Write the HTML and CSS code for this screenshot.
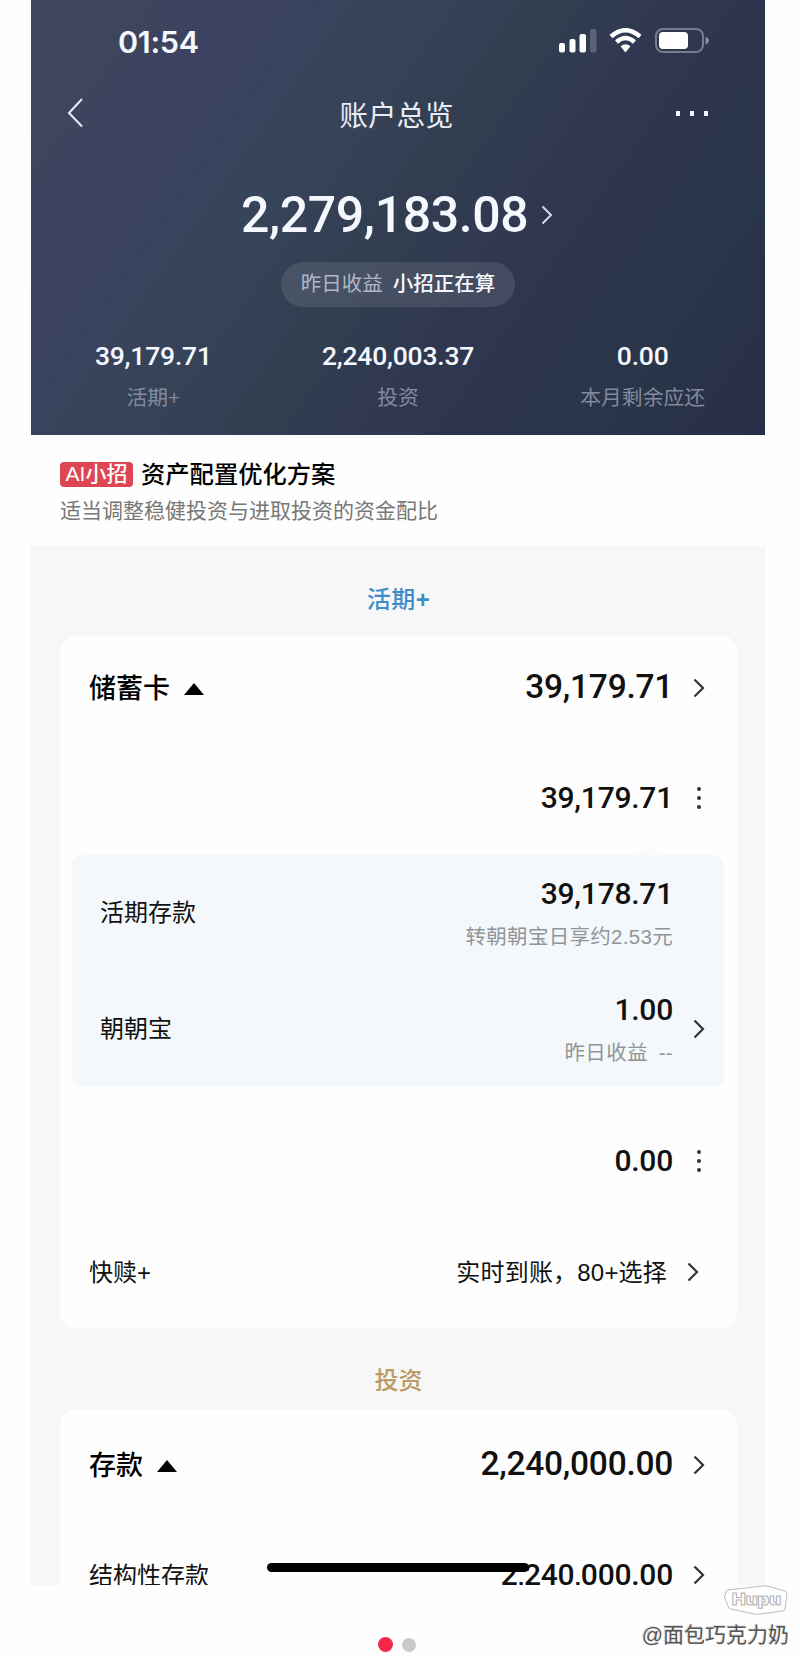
FILE: index.html
```
<!DOCTYPE html>
<html lang="zh-CN">
<head>
    <meta charset="utf-8">
    <title>账户总览</title>
    <link rel="stylesheet" href="styles.css">
</head>
<body>
    <div class="phone">
        <div class="header">
            <!-- status bar -->
            <div class="status">
                <span class="time">01:54</span>
                <div class="status-icons">
                    <svg class="signal" width="38" height="25" viewBox="0 0 38 25">
                        <rect x="0" y="15" width="6" height="9.500" rx="2" fill="#fff"/>
                        <rect x="10.500" y="11" width="6" height="13.500" rx="2" fill="#fff"/>
                        <rect x="20.500" y="6" width="6.500" height="18.500" rx="2" fill="#fff"/>
                        <rect x="31" y="1" width="6.500" height="23.500" rx="2" fill="#fff" opacity=".2"/>
                    </svg>
                    <svg class="wifi" width="33" height="25" viewBox="0 0 33 25">
                        <path d="M2 8.500Q16.500-4 31 8.500" fill="none" stroke="#fff" stroke-width="4.500"/>
                        <path d="M7.500 14Q16.500 6 25.500 14" fill="none" stroke="#fff" stroke-width="4.500"/>
                        <path d="M11.500 18.300Q16.500 14 21.500 18.300L16.500 24.500Z" fill="#fff"/>
                    </svg>
                    <svg class="battery" width="54" height="25" viewBox="0 0 54 25">
                        <rect x="1" y="1" width="47" height="23" rx="7" fill="none" stroke="#fff" stroke-opacity=".35" stroke-width="2"/>
                        <rect x="4" y="4" width="29" height="17" rx="4" fill="#fff"/>
                        <path d="M50.500 9Q54 10 54 12.500T50.500 16.500Z" fill="#fff" opacity=".45"/>
                    </svg>
                </div>
            </div>
            <!-- nav bar -->
            <div class="nav">
                <svg width="16" height="30" viewBox="0 0 16 30"><path d="M15 1L2 15L15 28.500" fill="none" stroke="#e9ecf8" stroke-width="2"/></svg>
                <span class="nav-title">账户总览</span>
                <span class="more"><i></i><i></i><i></i></span>
            </div>
            <div class="total">
                <span class="total-num">2,279,183.08</span>
                <svg width="12" height="20" viewBox="0 0 12 20"><path d="M1.500 1.500L10 10L1.500 18.500" fill="none" stroke="#d5d9e4" stroke-width="2"/></svg>
            </div>
            <div class="pill"><span>昨日收益</span><b>小招正在算</b></div>
            <div class="stats">
                <div class="stat"><span class="stat-num">39,179.71</span><span class="stat-label">活期+</span></div>
                <div class="stat"><span class="stat-num">2,240,003.37</span><span class="stat-label">投资</span></div>
                <div class="stat"><span class="stat-num">0.00</span><span class="stat-label">本月剩余应还</span></div>
            </div>
        </div>

        <div class="advice">
            <div class="advice-title"><span class="badge">AI小招</span><span class="advice-text">资产配置优化方案</span></div>
            <div class="advice-sub">适当调整稳健投资与进取投资的资金配比</div>
        </div>

        <div class="main">
            <div class="section-title blue">活期<b>+</b></div>
            <div class="card">
                <div class="row first">
                    <span class="name bold">储蓄卡<i class="triangle"></i></span>
                    <span class="num big">39,179.71</span>
                    <svg class="arrow" width="12" height="20" viewBox="0 0 12 20"><path d="M1.500 1.500L10 10L1.500 18.500"/></svg>
                </div>
                <div class="row second">
                    <span class="num">39,179.71</span>
                    <span class="dots"><i></i><i></i><i></i></span>
                </div>
                <div class="panel">
                    <div class="item">
                        <span class="name">活期存款</span>
                        <div class="values">
                            <span class="num">39,178.71</span>
                            <span class="note">转朝朝宝日享约2.53元</span>
                        </div>
                    </div>
                    <div class="item">
                        <span class="name">朝朝宝</span>
                        <div class="values">
                            <span class="num">1.00</span>
                            <span class="note">昨日收益 --</span>
                        </div>
                        <svg class="arrow" width="12" height="20" viewBox="0 0 12 20"><path d="M1.500 1.500L10 10L1.500 18.500"/></svg>
                    </div>
                </div>
                <div class="row">
                    <span class="num">0.00</span>
                    <span class="dots"><i></i><i></i><i></i></span>
                </div>
                <div class="row redeem">
                    <span class="name">快赎+</span>
                    <span class="text">实时到账，80+选择</span>
                    <svg class="arrow" width="12" height="20" viewBox="0 0 12 20"><path d="M1.500 1.500L10 10L1.500 18.500"/></svg>
                </div>
            </div>

            <div class="section-title gold">投资</div>
            <div class="card">
                <div class="row">
                    <span class="name bold">存款<i class="triangle"></i></span>
                    <span class="num big">2,240,000.00</span>
                    <svg class="arrow" width="12" height="20" viewBox="0 0 12 20"><path d="M1.500 1.500L10 10L1.500 18.500"/></svg>
                </div>
                <div class="row">
                    <span class="name">结构性存款</span>
                    <span class="num">2,240,000.00</span>
                    <svg class="arrow" width="12" height="20" viewBox="0 0 12 20"><path d="M1.500 1.500L10 10L1.500 18.500"/></svg>
                </div>
            </div>
        </div>
        <div class="home-bar"></div>
    </div>

    <!-- page dots -->
    <div class="pager"><i class="on"></i><i></i></div>

    <!-- watermark -->
    <div class="watermark">
        <svg width="66" height="31" viewBox="0 0 66 31">
            <path d="M3 8Q2 6 5 5L40 1Q42 .500 44 1L62 6Q64 7 64 9L62 24Q62 26 59 26L38 29Q32 30 27 28L8 24Q6 24 5 21L1.500 12Z" fill="#fff" stroke="#bbb" stroke-width="1"/>
            <text x="9" y="20" textLength="49" lengthAdjust="spacingAndGlyphs" font-family="Inter, sans-serif" font-size="16" font-weight="900" fill="#fff" stroke="#b5b5b5" stroke-width="1">Hupu</text>
        </svg>
        <span class="author">@面包巧克力奶</span>
    </div>
</body>
</html>
```
FILE: styles.css
```
* {
    box-sizing: border-box;
}
body {
    margin: 0;
    height: 1656px;
    position: relative;
    background-color: #fefefe;
    color: #111;
    font-family: "Liberation Sans", "Noto Sans CJK SC", sans-serif;
    font-size: 24px;
    overflow: hidden;
}
svg {
    display: block;
    flex-shrink: 0;
}
.phone {
    position: relative;
    width: 734px;
    height: 1585px;
    margin-left: 31px;
    overflow: hidden;
}

/* header */
.header {
    height: 435px;
    background: linear-gradient(125deg, #40475c 0%, #3b4260 22%, #36445a 36%, #323e50 50%, #2f3650 66%, #293548 84%, #282e47 100%);
    color: #f6f8ff;
}
.status {
    display: flex;
    justify-content: space-between;
    height: 82px;
    padding: 0 56px 0 87px;
    align-items: center;
}
.time {
    font-family: Inter, sans-serif;
    font-weight: 600;
    font-size: 30.500px;
    letter-spacing: -0.300px;
}
.status-icons {
    display: flex;
    margin-top: -2px;
}
.wifi {
    margin-left: 12px;
}
.battery {
    margin-left: 13px;
}
.nav {
    display: flex;
    justify-content: space-between;
    align-items: center;
    height: 62px;
    padding: 0 57px 0 36px;
}
.nav-title {
    font-size: 28.500px;
    padding-left: 34px;
    color: #e9ecf6;
}
.more {
    display: flex;
    gap: 10px;
}
.more i {
    width: 4px;
    height: 5px;
    background-color: #f3f5ff;
}
.total {
    display: flex;
    align-items: center;
    height: 118px;
    padding: 24px 0 0 210px;
}
.total-num,
.stat-num,
.num {
    font-family: Roboto, sans-serif;
    font-weight: 500;
    letter-spacing: -0.008em;
}
.total-num {
    font-size: 50px;
    line-height: 60px;
    width: 290px;
}
.total svg {
    margin-left: 10px;
}
.pill {
    display: flex;
    align-items: center;
    justify-content: center;
    gap: 10px;
    width: 234px;
    height: 45px;
    margin: 0 auto;
    padding-bottom: 5px;
    border-radius: 23px;
    background-color: rgba(255, 255, 255, 0.1);
    font-size: 20.500px;
    color: #b0b6c5;
}
.pill b {
    font-weight: 500;
    color: #f6f8ff;
}
.stats {
    display: flex;
    padding-top: 32px;
}
.stat {
    display: flex;
    flex: 1;
    flex-direction: column;
    align-items: center;
}
.stat-num {
    font-size: 26.500px;
    line-height: 33px;
}
.stat-label {
    margin-top: 10px;
    font-size: 20.800px;
    line-height: 32px;
    color: #838a9f;
}

/* advice banner */
.advice {
    height: 111px;
    padding: 22px 29px 0;
}
.advice-title {
    display: flex;
    align-items: center;
    height: 34px;
    font-size: 24.300px;
    font-weight: 500;
    color: #000;
}
.advice-text {
    margin-top: -4px;
}
.badge {
    width: 73px;
    height: 25px;
    margin-right: 8px;
    border-radius: 4px;
    background-color: #df4654;
    color: #fff;
    font-size: 21px;
    line-height: 23px;
    text-align: center;
}
.advice-sub {
    margin-top: 4px;
    font-size: 21px;
    line-height: 32px;
    color: #777;
}

/* account list */
.main {
    height: 1039px;
    padding: 0 28px 0 29px;
    background-color: #f7f7f7;
}
.section-title {
    height: 90px;
    padding-top: 19px;
    line-height: 70px;
    font-size: 24px;
    font-weight: 500;
    text-align: center;
}
.blue {
    color: #3c8ecb;
    letter-spacing: 0.500px;
}
.gold {
    height: 82px;
    padding-top: 22px;
    line-height: 62px;
    color: #b99b63;
}
.card {
    border-radius: 15px;
    background-color: #fefefe;
}
.row {
    display: flex;
    align-items: center;
    justify-content: flex-end;
    height: 110px;
    padding: 0 32px 0 29px;
}
.first {
    height: 104px;
}
.second {
    height: 115px;
}
.redeem {
    height: 112px;
    padding-right: 38px;
}
.name {
    margin-top: -4px;
    margin-right: auto;
}
.item .name {
    margin-top: -5px;
}
.text {
    margin-top: -4px;
    letter-spacing: 0.200px;
}
.bold {
    display: flex;
    align-items: center;
    font-size: 27px;
    font-weight: 500;
    color: #000;
}
.triangle {
    margin: 5px 0 0 14px;
    border: 10px solid transparent;
    border-top: 0;
    border-bottom: 12px solid #000;
}
.num {
    font-size: 30px;
    line-height: 36px;
}
.big {
    margin-top: -3px;
    font-size: 33.500px;
}
.arrow {
    margin-left: 20px;
    fill: none;
    stroke: #333;
    stroke-width: 2.200;
}
.dots {
    display: flex;
    flex-direction: column;
    gap: 5px;
    width: 12px;
    margin-left: 20px;
    align-items: center;
}
.dots i {
    width: 4px;
    height: 4px;
    border-radius: 50%;
    background-color: #333;
}
.panel {
    position: relative;
    margin: 0 13px 19px 12px;
    border-radius: 10px;
    background-color: #f4f8fb;
}
.panel::before {
    content: "";
    position: absolute;
    right: 62px;
    top: -13px;
    border: 13px solid transparent;
    border-top: 0;
    border-bottom-color: #f9fbfc;
}
.item {
    display: flex;
    align-items: center;
    height: 116px;
    padding: 0 19px 0 28px;
}
.values {
    display: flex;
    flex-direction: column;
    align-items: flex-end;
    margin-right: 32px;
    padding-top: 2px;
}
.values + .arrow {
    margin-left: -12px;
}
.note {
    margin-top: 9px;
    font-size: 20.500px;
    line-height: 32px;
    letter-spacing: 0.300px;
    word-spacing: 5px;
    color: #929598;
}
.home-bar {
    position: absolute;
    left: 236px;
    top: 1563px;
    width: 262px;
    height: 9px;
    border-radius: 5px;
    background-color: #000;
}
.pager {
    display: flex;
    align-items: center;
    gap: 9px;
    margin: 52px 0 0 378px;
}
.pager i {
    width: 14px;
    height: 14px;
    border-radius: 50%;
    background-color: #cacaca;
}
.pager .on {
    width: 15px;
    height: 15px;
    background-color: #f5264a;
}

/* watermark lies over the corner */
.watermark {
    position: absolute;
    right: 11px;
    bottom: 4px;
    display: flex;
    flex-direction: column;
    align-items: flex-end;
}
.author {
    margin-top: 2px;
    font-size: 21px;
    line-height: 34px;
    color: #555;
    text-shadow: -1px -1px 0 #ddd;
}
```
